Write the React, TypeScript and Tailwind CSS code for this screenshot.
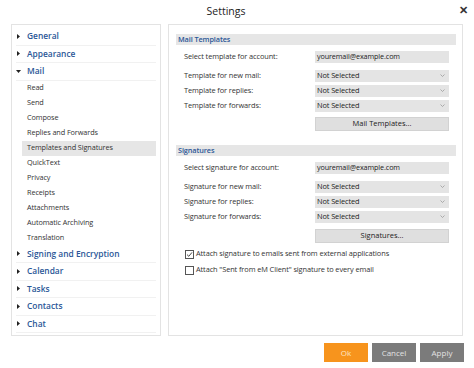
import React from 'react';

const font = { fontFamily: '"Open Sans", "Noto Sans", sans-serif' };

type NavItem = { label: string; children?: string[]; open?: boolean };

const nav: NavItem[] = [
  { label: 'General' },
  { label: 'Appearance' },
  {
    label: 'Mail',
    open: true,
    children: [
      'Read',
      'Send',
      'Compose',
      'Replies and Forwards',
      'Templates and Signatures',
      'QuickText',
      'Privacy',
      'Receipts',
      'Attachments',
      'Automatic Archiving',
      'Translation',
    ],
  },
  { label: 'Signing and Encryption' },
  { label: 'Calendar' },
  { label: 'Tasks' },
  { label: 'Contacts' },
  { label: 'Chat' },
];

const Caret: React.FC<{ open?: boolean }> = ({ open }) => (
  <svg width="5" height="5" viewBox="0 0 5 5" className="mr-[6px] shrink-0">
    {open ? <path d="M0 1 L5 1 L2.5 4 Z" fill="#222" /> : <path d="M1 0 L4 2.5 L1 5 Z" fill="#222" />}
  </svg>
);

const SectionHeader: React.FC<{ title: string }> = ({ title }) => (
  <div className="h-[11px] bg-[#e6e6e6] flex items-center pl-[2px] text-[7.3px] text-[#2b5797] font-semibold leading-none tracking-[-0.1px]">
    {title}
  </div>
);

const Label: React.FC<{ text: string }> = ({ text }) => (
  <div className="w-[139px] pl-[8px] text-[7.4px] text-[#333] leading-none tracking-[-0.1px]">{text}</div>
);

const ReadOnlyField: React.FC<{ label: string; value: string }> = ({ label, value }) => (
  <div className="h-[14px] flex items-center">
    <Label text={label} />
    <div className="w-[134px] h-[12px] bg-[#e4e4e4] flex items-center pl-[2px] text-[7.2px] text-[#222] leading-none tracking-[-0.1px]">
      {value}
    </div>
  </div>
);

const SelectRow: React.FC<{ label: string }> = ({ label }) => (
  <div className="h-[15px] flex items-center">
    <Label text={label} />
    <div className="w-[134px] h-[12px] bg-[#e4e4e4] flex items-center justify-between pl-[2px] pr-[4px] text-[7.4px] text-[#222] leading-none tracking-[-0.1px]">
      <span>Not Selected</span>
      <svg width="5" height="3" viewBox="0 0 5 3">
        <path d="M0.5 0.5 L2.5 2.5 L4.5 0.5" stroke="#9a9a9a" strokeWidth="0.8" fill="none" />
      </svg>
    </div>
  </div>
);

const WideButton: React.FC<{ text: string }> = ({ text }) => (
  <div className="h-[16px] flex items-center">
    <div className="w-[139px]" />
    <div className="w-[134px] h-[14px] bg-[#dfdfdf] border border-[#d2d2d2] flex items-center justify-center text-[7.5px] text-[#222] leading-none">
      {text}
    </div>
  </div>
);

const Check: React.FC<{ checked?: boolean; text: string }> = ({ checked, text }) => (
  <div className="h-[16px] flex items-center pl-[9px]">
    <div className="w-[9px] h-[9px] border border-[#555] bg-white flex items-center justify-center mr-[2px]">
      {checked && (
        <svg width="7" height="7" viewBox="0 0 7 7">
          <path d="M1 3.6 L2.8 5.3 L6 1.4" stroke="#333" strokeWidth="0.9" fill="none" />
        </svg>
      )}
    </div>
    <span className="text-[7.4px] text-[#333] leading-none tracking-[-0.1px]">{text}</span>
  </div>
);

export default function App() {
  return (
    <div className="w-[474px] h-[368px] bg-white relative overflow-hidden" style={font}>
      {/* Title bar */}
      <div className="h-[24px] flex items-center justify-center pr-[22px] text-[10.5px] text-[#222]">
        Settings
      </div>
      <div className="absolute right-[6px] top-[2px] text-[11px] font-bold text-[#333]">✕</div>

      {/* Body */}
      <div className="flex pl-[11px] gap-[7px]">
        {/* Left nav */}
        <div className="w-[150px] h-[312px] border border-[#e3e3e3] pt-[3px] pl-[3px] pr-[4px]">
          {nav.map((item) => (
            <div key={item.label}>
              <div className="h-[17.5px] flex items-center border-b border-[#f1f1f1] ml-[1px]">
                <Caret open={item.open} />
                <span className="text-[8.4px] text-[#2b5797] font-semibold leading-none">{item.label}</span>
              </div>
              {item.children?.map((c) => (
                <div
                  key={c}
                  className={`h-[15px] flex items-center pl-[5px] ml-[7px] text-[7.3px] text-[#333] leading-none tracking-[-0.1px] ${
                    c === 'Templates and Signatures' ? 'bg-[#e6e6e6]' : ''
                  }`}
                >
                  {c}
                </div>
              ))}
            </div>
          ))}
        </div>

        {/* Right content */}
        <div className="w-[295px] h-[312px] border border-[#e3e3e3] pt-[9px] pl-[7px] pr-[6px]">
          <SectionHeader title="Mail Templates" />
          <div className="mt-[5px]">
            <ReadOnlyField label="Select template for account:" value="youremail@example.com" />
          </div>
          <div className="mt-[4px]">
            <SelectRow label="Template for new mail:" />
            <SelectRow label="Template for replies:" />
            <SelectRow label="Template for forwards:" />
          </div>
          <div className="mt-[3px]">
            <WideButton text="Mail Templates..." />
          </div>

          <div className="mt-[13px]">
            <SectionHeader title="Signatures" />
          </div>
          <div className="mt-[5px]">
            <ReadOnlyField label="Select signature for account:" value="youremail@example.com" />
          </div>
          <div className="mt-[4px]">
            <SelectRow label="Signature for new mail:" />
            <SelectRow label="Signature for replies:" />
            <SelectRow label="Signature for forwards:" />
          </div>
          <div className="mt-[4px]">
            <WideButton text="Signatures..." />
          </div>
          <div className="mt-[2px]">
            <Check checked text="Attach signature to emails sent from external applications" />
            <Check text={'Attach "Sent from eM Client" signature to every email'} />
          </div>
        </div>
      </div>

      {/* Footer */}
      <div className="flex justify-end gap-[4px] pr-[10px] mt-[7px]">
        <button className="w-[44px] h-[19px] bg-[#f7941d] text-[#fde7c8] text-[8px] leading-none">Ok</button>
        <button className="w-[44px] h-[19px] bg-[#7b7b7b] text-[#e2e2e2] text-[8px] leading-none">Cancel</button>
        <button className="w-[44px] h-[19px] bg-[#7b7b7b] text-[#e2e2e2] text-[8px] leading-none">Apply</button>
      </div>
    </div>
  );
}
